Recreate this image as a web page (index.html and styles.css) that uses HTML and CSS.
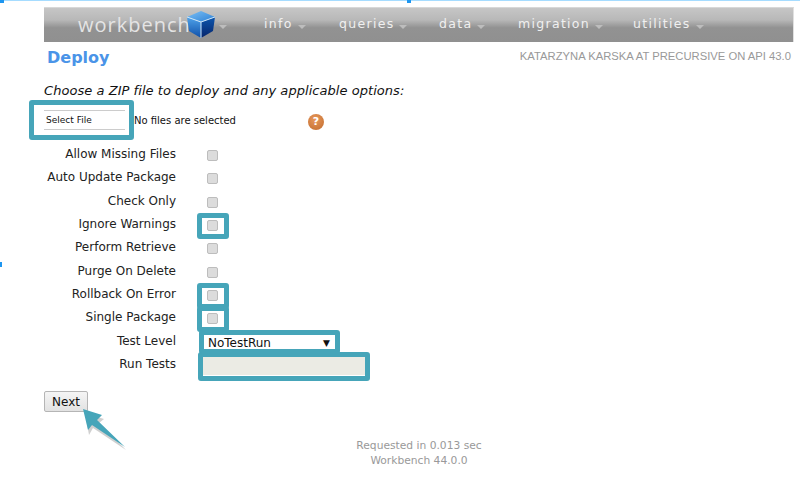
FILE: index.html
```html
<!DOCTYPE html>
<html lang="en">
<head>
  <meta charset="UTF-8">
  <title>Workbench - Deploy</title>
  <link rel="stylesheet" href="styles.css">
</head>
<body>
  <div class="select-line"></div>
  <span class="handle handle-a"></span>
  <span class="handle handle-b"></span>
  <span class="handle handle-c"></span>

  <div class="page">
    <div class="nav">
      <div class="logo">workbench</div>
      <svg class="cube" width="30" height="28" viewBox="0 0 30 28">
        <defs>
          <linearGradient id="cubeTop" x1="0" y1="0" x2="1" y2="1">
            <stop offset="0" stop-color="#7cc0f4"/>
            <stop offset="1" stop-color="#2b7fd6"/>
          </linearGradient>
          <linearGradient id="cubeLeft" x1="0" y1="0" x2="0" y2="1">
            <stop offset="0" stop-color="#4fa3ea"/>
            <stop offset="1" stop-color="#0f4fa8"/>
          </linearGradient>
          <linearGradient id="cubeRight" x1="0" y1="0" x2="0" y2="1">
            <stop offset="0" stop-color="#0d56ad"/>
            <stop offset="1" stop-color="#05246b"/>
          </linearGradient>
        </defs>
        <polygon points="15,0 29,6 15,11 1,6" fill="url(#cubeTop)"/>
        <polygon points="1,6 15,11 15,27 3,20" fill="url(#cubeLeft)"/>
        <polygon points="15,11 29,6 27,20 15,27" fill="url(#cubeRight)"/>
        <path d="M1 6 L15 11 L29 6 M15 11 L15 27" fill="none" stroke="#cfe8fb" stroke-width="1"/>
      </svg>
      <span class="caret caret-logo"></span>
      <ul class="menu">
        <li class="menu-info">info<span class="caret"></span></li>
        <li class="menu-queries">queries<span class="caret"></span></li>
        <li class="menu-data">data<span class="caret"></span></li>
        <li class="menu-migration">migration<span class="caret"></span></li>
        <li>utilities<span class="caret"></span></li>
      </ul>
    </div>

    <div class="title-row">
      <h1>Deploy</h1>
      <div class="user">KATARZYNA KARSKA AT PRECURSIVE ON API 43.0</div>
    </div>

    <p class="intro">Choose a ZIP file to deploy and any applicable options:</p>

    <div class="file-row">
      <div class="mark mark-file">
        <button class="file-btn">Select File</button>
      </div>
      <span class="file-name">No files are selected</span>
      <span class="help">?</span>
    </div>

    <div class="options">
      <label>Allow Missing Files</label>
      <div class="cell"><input type="checkbox"></div>
      <label>Auto Update Package</label>
      <div class="cell"><input type="checkbox"></div>
      <label>Check Only</label>
      <div class="cell"><input type="checkbox"></div>
      <label>Ignore Warnings</label>
      <div class="cell"><span class="mark mark-check"><input type="checkbox"></span></div>
      <label>Perform Retrieve</label>
      <div class="cell"><input type="checkbox"></div>
      <label>Purge On Delete</label>
      <div class="cell"><input type="checkbox"></div>
      <label>Rollback On Error</label>
      <div class="cell"><span class="mark mark-check"><input type="checkbox"></span></div>
      <label>Single Package</label>
      <div class="cell"><span class="mark mark-check"><input type="checkbox"></span></div>
      <label>Test Level</label>
      <div class="cell">
        <div class="mark mark-select">
          <div class="fake-select">NoTestRun<span class="select-arrow">▼</span></div>
        </div>
      </div>
      <label>Run Tests</label>
      <div class="cell">
        <div class="mark mark-input"><div class="fake-input"></div></div>
      </div>
    </div>

    <button class="next">Next</button>

    <div class="footer">
      Requested in 0.013 sec<br>
      Workbench 44.0.0
    </div>
  </div>

  <!-- callout arrow pointing at Next -->
  <svg class="callout" width="60" height="50" viewBox="0 0 60 50">
    <polygon points="5,4 24,10 19,14 46,41 13,19 9,26" fill="#8a8a8a" opacity="0.4" transform="translate(0,2)"/>
    <polygon points="3,2 22,8 17,13 45,40 12,18 8,23" fill="#46a5b9"/>
  </svg>
</body>
</html>
```

FILE: styles.css
```css
body {
  margin: 0;
  background-color: #fff;
  font-family: "DejaVu Sans", Verdana, sans-serif;
  font-size: 12px;
  color: #222;
}
.select-line {
  height: 1px;
  background-color: #a6dcff;
}
.handle {
  position: absolute;
  width: 4px;
  height: 3px;
  background-color: #1e96f0;
}
.handle-a {
  top: 0;
  left: 0;
}
.handle-b {
  top: 0;
  left: 407px;
}
.handle-c {
  top: 262px;
  left: 0;
  width: 2px;
  height: 5px;
}
.page {
  width: 750px;
  margin-left: 44px;
}
.nav {
  display: flex;
  align-items: center;
  height: 35px;
  margin-top: 6px;
  background: linear-gradient(#c6c6c6 0%, #b8b8b8 35%, #929292 58%, #909090 100%);
  border-top: 1px solid #d8d8d8;
  border-right: 1px solid #e0e0e0;
  color: #eee;
  box-sizing: border-box;
}
.logo {
  margin: 0 0 2px 34px;
  font-family: "Open Sans", sans-serif;
  font-size: 20px;
  font-weight: 400;
  letter-spacing: 1px;
  color: #e4e4e4;
  width: 108px;
}
.cube {
  flex-shrink: 0;
}
.caret {
  display: inline-block;
  margin-left: 5px;
  vertical-align: -1px;
  border-top: 4px solid #bdbdbd;
  border-left: 4px solid transparent;
  border-right: 4px solid transparent;
}
.caret-logo {
  margin-left: 3px;
  margin-top: 4px;
}
.menu {
  display: flex;
  margin: 0 0 4px 37px;
  padding: 0;
  list-style: none;
  font-size: 12.500px;
  letter-spacing: 1.3px;
  color: #f0f0f0;
}
.menu li {
  white-space: nowrap;
}
.menu-info {
  width: 75px;
}
.menu-queries {
  width: 100px;
}
.menu-data {
  width: 79px;
}
.menu-migration {
  width: 115px;
}
.title-row {
  display: flex;
  justify-content: space-between;
  margin-top: 6px;
  padding: 0 3px;
}
h1 {
  margin: 0;
  font-size: 16px;
  line-height: 20px;
  color: #4a94e8;
}
.user {
  font-family: "Liberation Sans", Arial, sans-serif;
  font-size: 11.250px;
  line-height: 16px;
  color: #999;
}
.intro {
  margin: 14px 0 0;
  font-size: 13px;
  line-height: 18px;
  font-style: italic;
  color: #111;
  letter-spacing: 0.050px;
}
.mark {
  position: relative;
}
.mark::after {
  content: "";
  position: absolute;
  border: 5px solid #46a5b9;
  border-radius: 3px;
  pointer-events: none;
}
.file-row {
  display: flex;
  align-items: center;
  height: 20px;
  margin-top: 10px;
}
.mark-file::after {
  inset: -10px -9px -10px -15px;
}
.file-btn {
  display: block;
  width: 81px;
  height: 20px;
  padding: 0 0 0 2px;
  background: #fff;
  border: 0;
  border-top: 1px solid #ccc;
  border-bottom: 1px solid #ccc;
  font-family: "DejaVu Sans", sans-serif;
  font-size: 9px;
  color: #111;
  text-align: left;
}
.file-name {
  margin-left: 9px;
  font-size: 10px;
  color: #111;
  width: 174px;
}
.help {
  width: 16px;
  height: 16px;
  margin-top: 3px;
  border-radius: 50%;
  background: radial-gradient(circle at 45% 35%, #e8995c, #c06a2c);
  color: #fff;
  font-size: 11px;
  font-weight: bold;
  line-height: 16px;
  text-align: center;
}
.options {
  display: grid;
  grid-template-columns: 132px 1fr;
  grid-auto-rows: 23.330px;
  column-gap: 27px;
  margin-top: 13px;
}
.options label {
  text-align: right;
  line-height: 23px;
  color: #222;
  white-space: nowrap;
}
.cell {
  display: flex;
  align-items: center;
  padding-top: 2px;
  box-sizing: border-box;
}
.options input[type="checkbox"] {
  appearance: none;
  display: block;
  width: 11px;
  height: 11px;
  margin: 0 0 0 4px;
  background: #dcdcdc;
  border: 1px solid #bdbdbd;
  border-radius: 2px;
}
.mark-check {
  display: block;
}
.mark-check::after {
  inset: -7px -11px -8px -6px;
}
.mark-select::after {
  inset: -5px -5px -4px -4px;
}
.fake-select {
  position: relative;
  width: 127px;
  height: 15px;
  padding-left: 5px;
  background: #fff;
  font-size: 12px;
  line-height: 17px;
  color: #111;
}
.select-arrow {
  position: absolute;
  right: 5px;
  top: 0;
  font-size: 9px;
}
.mark-input::after {
  inset: -5px -4px -6px -5px;
}
.fake-input {
  width: 163px;
  height: 18px;
  margin-left: -1px;
  background: #ebebe4;
  border-left: 1px solid #aaa;
}
.next {
  display: block;
  width: 44px;
  height: 21px;
  margin-top: 15px;
  padding: 0;
  background: linear-gradient(#f5f5f5, #e2e2e2);
  border: 1px solid #b5b5b5;
  border-radius: 2px;
  font-family: "DejaVu Sans", sans-serif;
  font-size: 12px;
  color: #111;
}
.footer {
  margin-top: 26px;
  text-align: center;
  font-size: 10.700px;
  line-height: 15px;
  color: #999;
}
.callout {
  position: absolute;
  top: 407px;
  left: 80px;
}
```
